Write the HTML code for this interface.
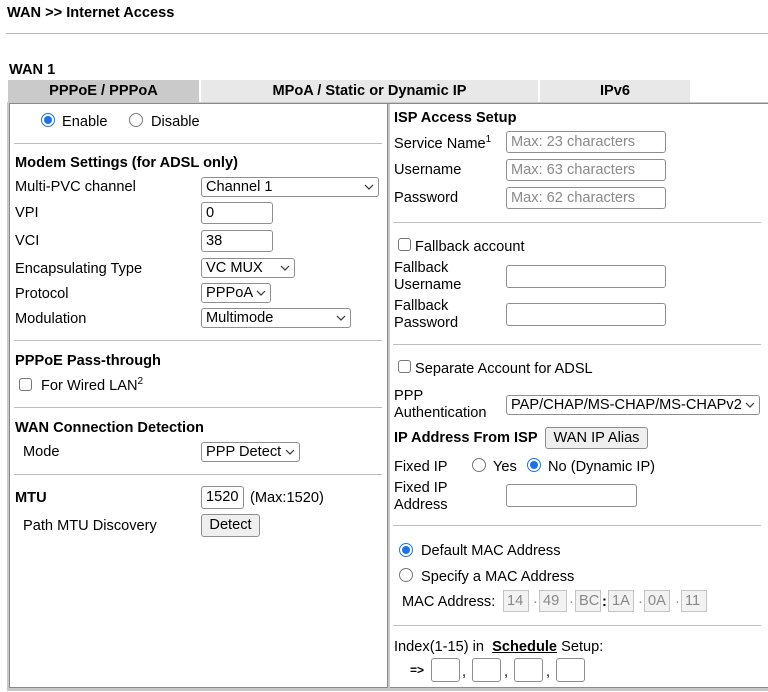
<!DOCTYPE html>
<html><head><meta charset="utf-8"><style>
*{box-sizing:border-box;margin:0;padding:0}
body{width:768px;height:692px;background:#fff;position:relative;overflow:hidden;font-family:"Liberation Sans",Arial,sans-serif;color:#000}
.t{position:absolute;font-size:14.6px;line-height:16px;white-space:nowrap}
.b{font-weight:bold}
.hr{position:absolute;height:1px;background:#bdbdbd}
.in{position:absolute;border:1px solid #8e8e8e;border-radius:3px;background:#fff;font-size:14.6px;line-height:20px;padding-left:4px;white-space:nowrap}
.ph{color:#8a8a8a}
.sel{position:absolute;border:1px solid #8e8e8e;border-radius:3px;background:#fff;font-size:14.6px;line-height:18px;padding-left:4px;white-space:nowrap}
.sel svg{position:absolute;right:4px;top:6px}
.btn{position:absolute;border:1px solid #8e8e8e;border-radius:3px;background:#efefef;font-size:14.6px;text-align:center;white-space:nowrap}
.rad{position:absolute;width:14px;height:14px;border-radius:50%;border:1px solid #777;background:#fff}
.rad.on{border:1px solid #1a73e8;background:#fff}
.rad.on::after{content:"";position:absolute;left:2px;top:2px;width:8px;height:8px;border-radius:50%;background:#1a73e8}
.cb{position:absolute;width:13px;height:13px;border:1px solid #777;border-radius:3px;background:#fff}
.mac{position:absolute;border:1px solid #c4c4c4;background:#f2f2f2;color:#888;font-size:14.6px;line-height:20px;padding-left:3px;height:22px}
.sq{position:absolute;border:1px solid #8e8e8e;border-radius:3px;height:24px;width:29px;background:#fff}
</style></head><body>
<div class="t b" style="left:7px;top:5px">WAN &gt;&gt; Internet Access</div>
<div class="hr" style="left:6px;top:33px;width:762px;background:#b8b8b8"></div>
<div class="t b" style="left:9px;top:62px">WAN 1</div>
<div style="position:absolute;left:8px;top:80px;width:191px;height:22px;background:#cacaca"></div>
<div class="t b" style="left:8px;top:83px;width:191px;text-align:center">PPPoE / PPPoA</div>
<div style="position:absolute;left:201px;top:80px;width:337px;height:22px;background:#e8e8e8"></div>
<div class="t b" style="left:201px;top:83px;width:337px;text-align:center">MPoA / Static or Dynamic IP</div>
<div style="position:absolute;left:540px;top:80px;width:150px;height:22px;background:#e8e8e8"></div>
<div class="t b" style="left:540px;top:83px;width:150px;text-align:center">IPv6</div>
<div style="position:absolute;left:7px;top:102px;width:790px;height:589px;border-left:3px solid #c8c8c8;border-bottom:3px solid #c8c8c8;border-top:2px solid #c8c8c8"></div>
<div style="position:absolute;left:9px;top:103px;width:790px;height:585px;border-left:1px solid #8a8a8a;border-bottom:1px solid #8a8a8a;border-top:1px solid #8a8a8a"></div>
<div style="position:absolute;left:387px;top:104px;width:3px;height:584px;background:#c8c8c8;border-left:1px solid #8a8a8a"></div>
<div class="rad on" style="left:41px;top:113px"></div><div class="t" style="left:62px;top:114px">Enable</div>
<div class="rad" style="left:129px;top:113px"></div><div class="t" style="left:151px;top:114px">Disable</div>
<div class="hr" style="left:14px;top:143px;width:368px"></div>
<div class="t b" style="left:15px;top:155px">Modem Settings (for ADSL only)</div>
<div class="t" style="left:15px;top:179px">Multi-PVC channel</div>
<div class="sel" style="left:201px;top:177px;width:178px;height:20px">Channel 1<svg width="10" height="6"><path d="M1 1l4 4 4-4" stroke="#333" fill="none" stroke-width="1.2"/></svg></div>
<div class="t" style="left:15px;top:205px">VPI</div>
<div class="in" style="left:201px;top:202px;width:72px;height:22px">0</div>
<div class="t" style="left:15px;top:233px">VCI</div>
<div class="in" style="left:201px;top:230px;width:72px;height:22px">38</div>
<div class="t" style="left:15px;top:261px">Encapsulating Type</div>
<div class="sel" style="left:201px;top:258px;width:94px;height:20px">VC MUX<svg width="10" height="6"><path d="M1 1l4 4 4-4" stroke="#333" fill="none" stroke-width="1.2"/></svg></div>
<div class="t" style="left:15px;top:286px">Protocol</div>
<div class="sel" style="left:201px;top:283px;width:70px;height:20px">PPPoA<svg width="10" height="6"><path d="M1 1l4 4 4-4" stroke="#333" fill="none" stroke-width="1.2"/></svg></div>
<div class="t" style="left:15px;top:311px">Modulation</div>
<div class="sel" style="left:201px;top:308px;width:150px;height:20px">Multimode<svg width="10" height="6"><path d="M1 1l4 4 4-4" stroke="#333" fill="none" stroke-width="1.2"/></svg></div>
<div class="hr" style="left:14px;top:340px;width:368px"></div>
<div class="t b" style="left:15px;top:353px">PPPoE Pass-through</div>
<div class="cb" style="left:19px;top:378px"></div><div class="t" style="left:41px;top:378px">For Wired LAN<sup style="font-size:10px;vertical-align:6px;line-height:0">2</sup></div>
<div class="hr" style="left:14px;top:407px;width:368px"></div>
<div class="t b" style="left:15px;top:420px">WAN Connection Detection</div>
<div class="t" style="left:23px;top:444px">Mode</div>
<div class="sel" style="left:201px;top:442px;width:99px;height:20px">PPP Detect<svg width="10" height="6"><path d="M1 1l4 4 4-4" stroke="#333" fill="none" stroke-width="1.2"/></svg></div>
<div class="hr" style="left:14px;top:474px;width:368px"></div>
<div class="t b" style="left:15px;top:490px">MTU</div>
<div class="in" style="left:201px;top:486px;width:43px;height:23px;line-height:21px">1520</div>
<div class="t" style="left:250px;top:490px">(Max:1520)</div>
<div class="t" style="left:23px;top:518px">Path MTU Discovery</div>
<div class="btn" style="left:201px;top:514px;width:59px;height:23px;line-height:21px">Detect</div>
<div class="t b" style="left:394px;top:110px">ISP Access Setup</div>
<div class="t" style="left:394px;top:136px">Service Name<sup style="font-size:10px;vertical-align:6px;line-height:0">1</sup></div>
<div class="in ph" style="left:506px;top:131px;width:160px;height:22px">Max: 23 characters</div>
<div class="t" style="left:394px;top:162px">Username</div>
<div class="in ph" style="left:506px;top:159px;width:160px;height:22px">Max: 63 characters</div>
<div class="t" style="left:394px;top:190px">Password</div>
<div class="in ph" style="left:506px;top:187px;width:160px;height:22px">Max: 62 characters</div>
<div class="hr" style="left:393px;top:222px;width:368px"></div>
<div class="cb" style="left:398px;top:238px"></div><div class="t" style="left:415px;top:239px">Fallback account</div>
<div class="t" style="left:394px;top:260px">Fallback</div><div class="t" style="left:394px;top:277px">Username</div>
<div class="in" style="left:506px;top:265px;width:160px;height:23px"></div>
<div class="t" style="left:394px;top:298px">Fallback</div><div class="t" style="left:394px;top:315px">Password</div>
<div class="in" style="left:506px;top:303px;width:160px;height:23px"></div>
<div class="hr" style="left:393px;top:344px;width:368px"></div>
<div class="cb" style="left:398px;top:360px"></div><div class="t" style="left:415px;top:361px">Separate Account for ADSL</div>
<div class="t" style="left:394px;top:388px">PPP</div><div class="t" style="left:394px;top:405px">Authentication</div>
<div class="sel" style="left:506px;top:395px;width:254px;height:20px">PAP/CHAP/MS-CHAP/MS-CHAPv2<svg width="10" height="6"><path d="M1 1l4 4 4-4" stroke="#333" fill="none" stroke-width="1.2"/></svg></div>
<div class="t b" style="left:394px;top:430px">IP Address From ISP</div>
<div class="btn" style="left:545px;top:427px;width:103px;height:22px;line-height:20px">WAN IP Alias</div>
<div class="t" style="left:394px;top:459px">Fixed IP</div>
<div class="rad" style="left:472px;top:458px"></div><div class="t" style="left:493px;top:459px">Yes</div>
<div class="rad on" style="left:527px;top:458px"></div><div class="t" style="left:548px;top:459px">No (Dynamic IP)</div>
<div class="t" style="left:394px;top:480px">Fixed IP</div><div class="t" style="left:394px;top:497px">Address</div>
<div class="in" style="left:506px;top:484px;width:131px;height:23px"></div>
<div class="hr" style="left:393px;top:525px;width:368px"></div>
<div class="rad on" style="left:399px;top:543px"></div><div class="t" style="left:421px;top:543px">Default MAC Address</div>
<div class="rad" style="left:399px;top:568px"></div><div class="t" style="left:421px;top:569px">Specify a MAC Address</div>
<div class="t" style="left:402px;top:594px">MAC Address:</div>
<div class="mac" style="left:503px;top:590px;width:26px">14</div>
<div class="mac" style="left:539px;top:590px;width:28px">49</div>
<div class="mac" style="left:575px;top:590px;width:26px">BC</div>
<div class="t b" style="left:602px;top:594px">:</div>
<div class="mac" style="left:608px;top:590px;width:26px">1A</div>
<div class="mac" style="left:644px;top:590px;width:26px">0A</div>
<div class="mac" style="left:681px;top:590px;width:26px">11</div>
<div class="t" style="left:533px;top:594px;color:#888">·</div>
<div class="t" style="left:569px;top:594px;color:#888">·</div>
<div class="t" style="left:638px;top:594px;color:#888">·</div>
<div class="t" style="left:675px;top:594px;color:#888">·</div>
<div class="hr" style="left:393px;top:625px;width:368px"></div>
<div class="t" style="left:394px;top:639px">Index(1-15) in &nbsp;<b style="text-decoration:underline">Schedule</b> Setup:</div>
<div class="t b" style="left:410px;top:662px;font-size:12px">=&gt;</div>
<div class="sq" style="left:431px;top:658px"></div><div class="t" style="left:462px;top:664px">,</div>
<div class="sq" style="left:472px;top:658px"></div><div class="t" style="left:504px;top:664px">,</div>
<div class="sq" style="left:514px;top:658px"></div><div class="t" style="left:546px;top:664px">,</div>
<div class="sq" style="left:556px;top:658px"></div>
</body></html>
